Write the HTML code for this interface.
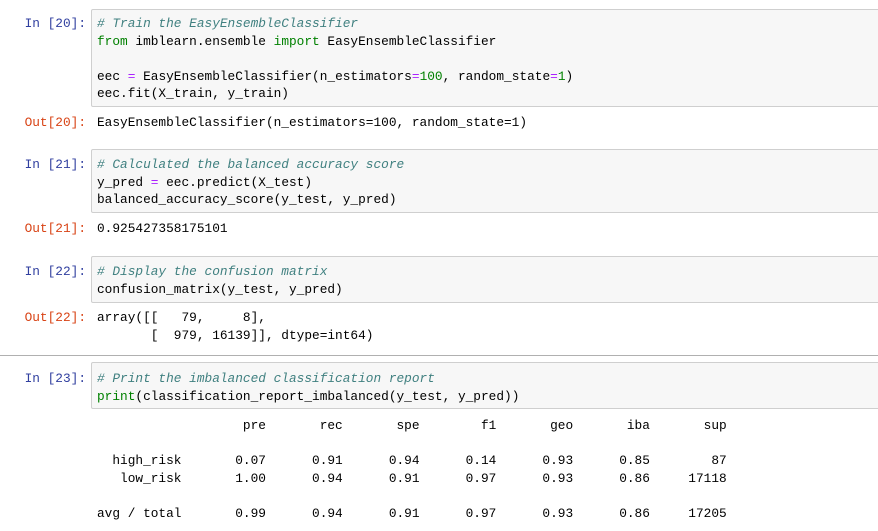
<!DOCTYPE html>
<html><head><style>
body{margin:0;width:878px;height:531px;background:#fff;overflow:hidden;position:relative;font-family:"Liberation Mono",monospace;font-size:12.8px;}
.p{position:absolute;left:0;width:86px;text-align:right;font-family:"Liberation Mono",monospace;font-size:12.8px;line-height:17.5px}
.in{color:#303F9F}.out{color:#D84315}
.box{position:absolute;left:91px;width:800px;background:#f7f7f7;border:1px solid #cfcfcf;border-radius:2px}
pre{margin:0;font-family:"Liberation Mono",monospace;font-size:12.8px;line-height:17.5px;color:#000;position:absolute;left:97px;white-space:pre}
.c{color:#408080;font-style:italic}.k{color:#008000}.n{color:#008000}.o{color:#AA22FF}
.sep{position:absolute;left:0;width:878px;top:355px;height:1px;background:#b0b0b0}
</style></head><body>
<div class="box" style="top:9px;height:96px"></div>
<div class="p in" style="top:15px">In [20]:</div>
<pre style="top:15px"><span class="c"># Train the EasyEnsembleClassifier</span>
<span class="k">from</span> imblearn.ensemble <span class="k">import</span> EasyEnsembleClassifier

eec <span class="o">=</span> EasyEnsembleClassifier(n_estimators<span class="o">=</span><span class="n">100</span>, random_state<span class="o">=</span><span class="n">1</span>)
eec.fit(X_train, y_train)</pre>
<div class="p out" style="top:114px">Out[20]:</div>
<pre style="top:114px">EasyEnsembleClassifier(n_estimators=100, random_state=1)</pre>

<div class="box" style="top:149px;height:62px"></div>
<div class="p in" style="top:156px">In [21]:</div>
<pre style="top:156px"><span class="c"># Calculated the balanced accuracy score</span>
y_pred <span class="o">=</span> eec.predict(X_test)
balanced_accuracy_score(y_test, y_pred)</pre>
<div class="p out" style="top:220px">Out[21]:</div>
<pre style="top:220px">0.925427358175101</pre>

<div class="box" style="top:256px;height:45px"></div>
<div class="p in" style="top:263px">In [22]:</div>
<pre style="top:263px"><span class="c"># Display the confusion matrix</span>
confusion_matrix(y_test, y_pred)</pre>
<div class="p out" style="top:309px">Out[22]:</div>
<pre style="top:309px">array([[   79,     8],
       [  979, 16139]], dtype=int64)</pre>

<div class="sep"></div>

<div class="box" style="top:362px;height:45px"></div>
<div class="p in" style="top:370px">In [23]:</div>
<pre style="top:370px"><span class="c"># Print the imbalanced classification report</span>
<span class="n">print</span>(classification_report_imbalanced(y_test, y_pred))</pre>
<pre style="top:417px">                   pre       rec       spe        f1       geo       iba       sup

  high_risk       0.07      0.91      0.94      0.14      0.93      0.85        87
   low_risk       1.00      0.94      0.91      0.97      0.93      0.86     17118

avg / total       0.99      0.94      0.91      0.97      0.93      0.86     17205</pre>
</body></html>
